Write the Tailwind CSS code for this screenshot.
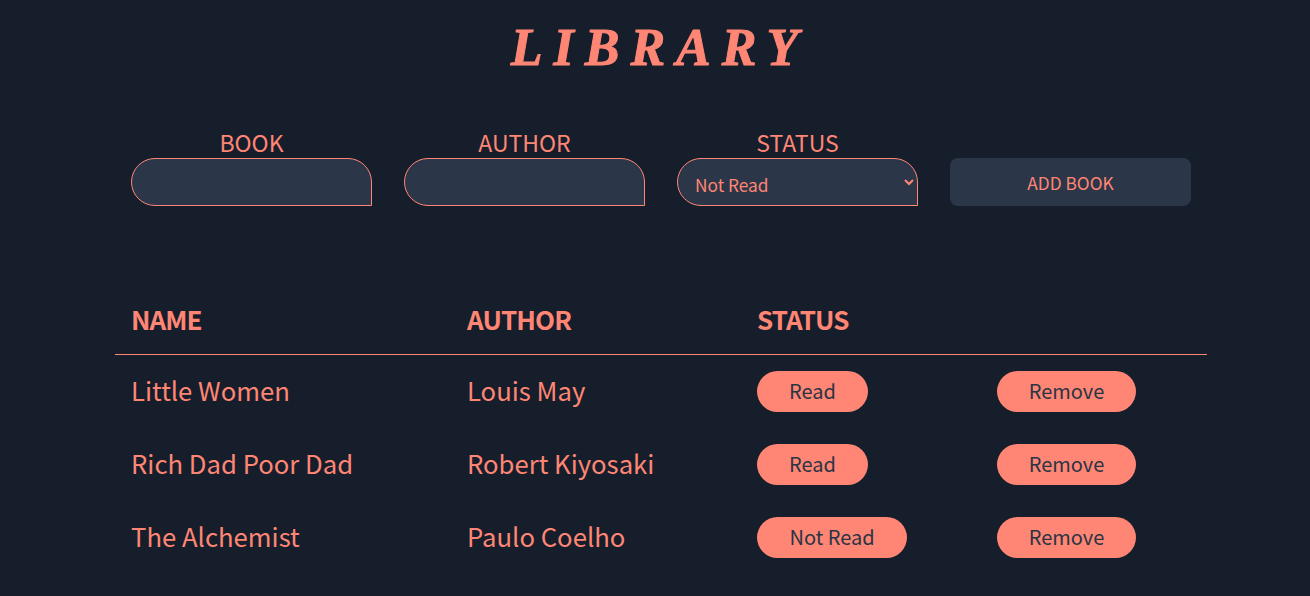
<!DOCTYPE html>
<html lang="en">

<head>
    <meta charset="UTF-8">
    <meta name="viewport" content="width=device-width, initial-scale=1.0">
    <title>Library</title>
    <script src="https://cdn.jsdelivr.net/npm/@tailwindcss/browser@4"></script>
</head>

<body class="bg-[#161e2c] text-[#ff8674] font-['Noto_Sans_CJK_SC','Noto_Sans',sans-serif] h-[596px] overflow-hidden">
    <div id="library" class="w-[1092px] ml-[115px]">
        <h1 class="pt-[18px] pr-[2px] h-[82px] text-center text-[52px] leading-[60px] font-bold italic font-['Liberation_Serif',serif] tracking-[11px] [-webkit-text-stroke:1px_#ff8674]">LIBRARY</h1>

        <form class="mt-[45px] px-4 grid grid-cols-4 gap-x-8">
            <label class="flex flex-col items-center">
                <span class="text-[23px] leading-[30px] mb-px">BOOK</span>
                <input type="text" class="w-full h-12 bg-[#2b3649] border border-[#ff8674] rounded-[24px] rounded-br-none">
            </label>
            <label class="flex flex-col items-center">
                <span class="text-[23px] leading-[30px] mb-px">AUTHOR</span>
                <input type="text" class="w-full h-12 bg-[#2b3649] border border-[#ff8674] rounded-[24px] rounded-br-none">
            </label>
            <label class="flex flex-col items-center">
                <span class="text-[23px] leading-[30px] mb-px">STATUS</span>
                <select class="w-full h-12 pl-[13px] pt-[4px] text-[17.3px] bg-[#2b3649] border border-[#ff8674] rounded-[24px] rounded-br-none">
                    <option>Not Read</option>
                    <option>Read</option>
                </select>
            </label>
            <div class="flex items-end">
                <button type="button" class="w-full h-12 pt-[2px] bg-[#2b3649] rounded-lg text-[17.3px] text-[#ff8674]">ADD BOOK</button>
            </div>
        </form>

        <div id="books" class="mt-[88px]">
            <div class="grid grid-cols-[336px_290px_240px_226px] h-[61px] pb-[12px] items-center border-b border-[#ff8674] text-[26px] font-bold tracking-[-0.9px]">
                <div class="pl-4">NAME</div>
                <div class="pl-4">AUTHOR</div>
                <div class="pl-4">STATUS</div>
                <div></div>
            </div>
            <div class="grid grid-cols-[336px_290px_240px_226px] h-[73px] pb-[2px] items-center text-[25.7px]">
                <div class="pl-4">Little Women</div>
                <div class="pl-4">Louis May</div>
                <div class="pl-4"><button class="h-[41px] w-[111px] rounded-[21px] bg-[#ff8674] text-[#2a3444] text-[20px]">Read</button></div>
                <div class="pl-4"><button class="h-[41px] w-[139px] rounded-[21px] bg-[#ff8674] text-[#2a3444] text-[20px]">Remove</button></div>
            </div>
            <div class="grid grid-cols-[336px_290px_240px_226px] h-[73px] pb-[2px] items-center text-[25.7px]">
                <div class="pl-4">Rich Dad Poor Dad</div>
                <div class="pl-4">Robert Kiyosaki</div>
                <div class="pl-4"><button class="h-[41px] w-[111px] rounded-[21px] bg-[#ff8674] text-[#2a3444] text-[20px]">Read</button></div>
                <div class="pl-4"><button class="h-[41px] w-[139px] rounded-[21px] bg-[#ff8674] text-[#2a3444] text-[20px]">Remove</button></div>
            </div>
            <div class="grid grid-cols-[336px_290px_240px_226px] h-[73px] pb-[2px] items-center text-[25.7px]">
                <div class="pl-4">The Alchemist</div>
                <div class="pl-4">Paulo Coelho</div>
                <div class="pl-4"><button class="h-[41px] w-[150px] rounded-[21px] bg-[#ff8674] text-[#2a3444] text-[20px]">Not Read</button></div>
                <div class="pl-4"><button class="h-[41px] w-[139px] rounded-[21px] bg-[#ff8674] text-[#2a3444] text-[20px]">Remove</button></div>
            </div>
        </div>
    </div>
</body>

</html>
